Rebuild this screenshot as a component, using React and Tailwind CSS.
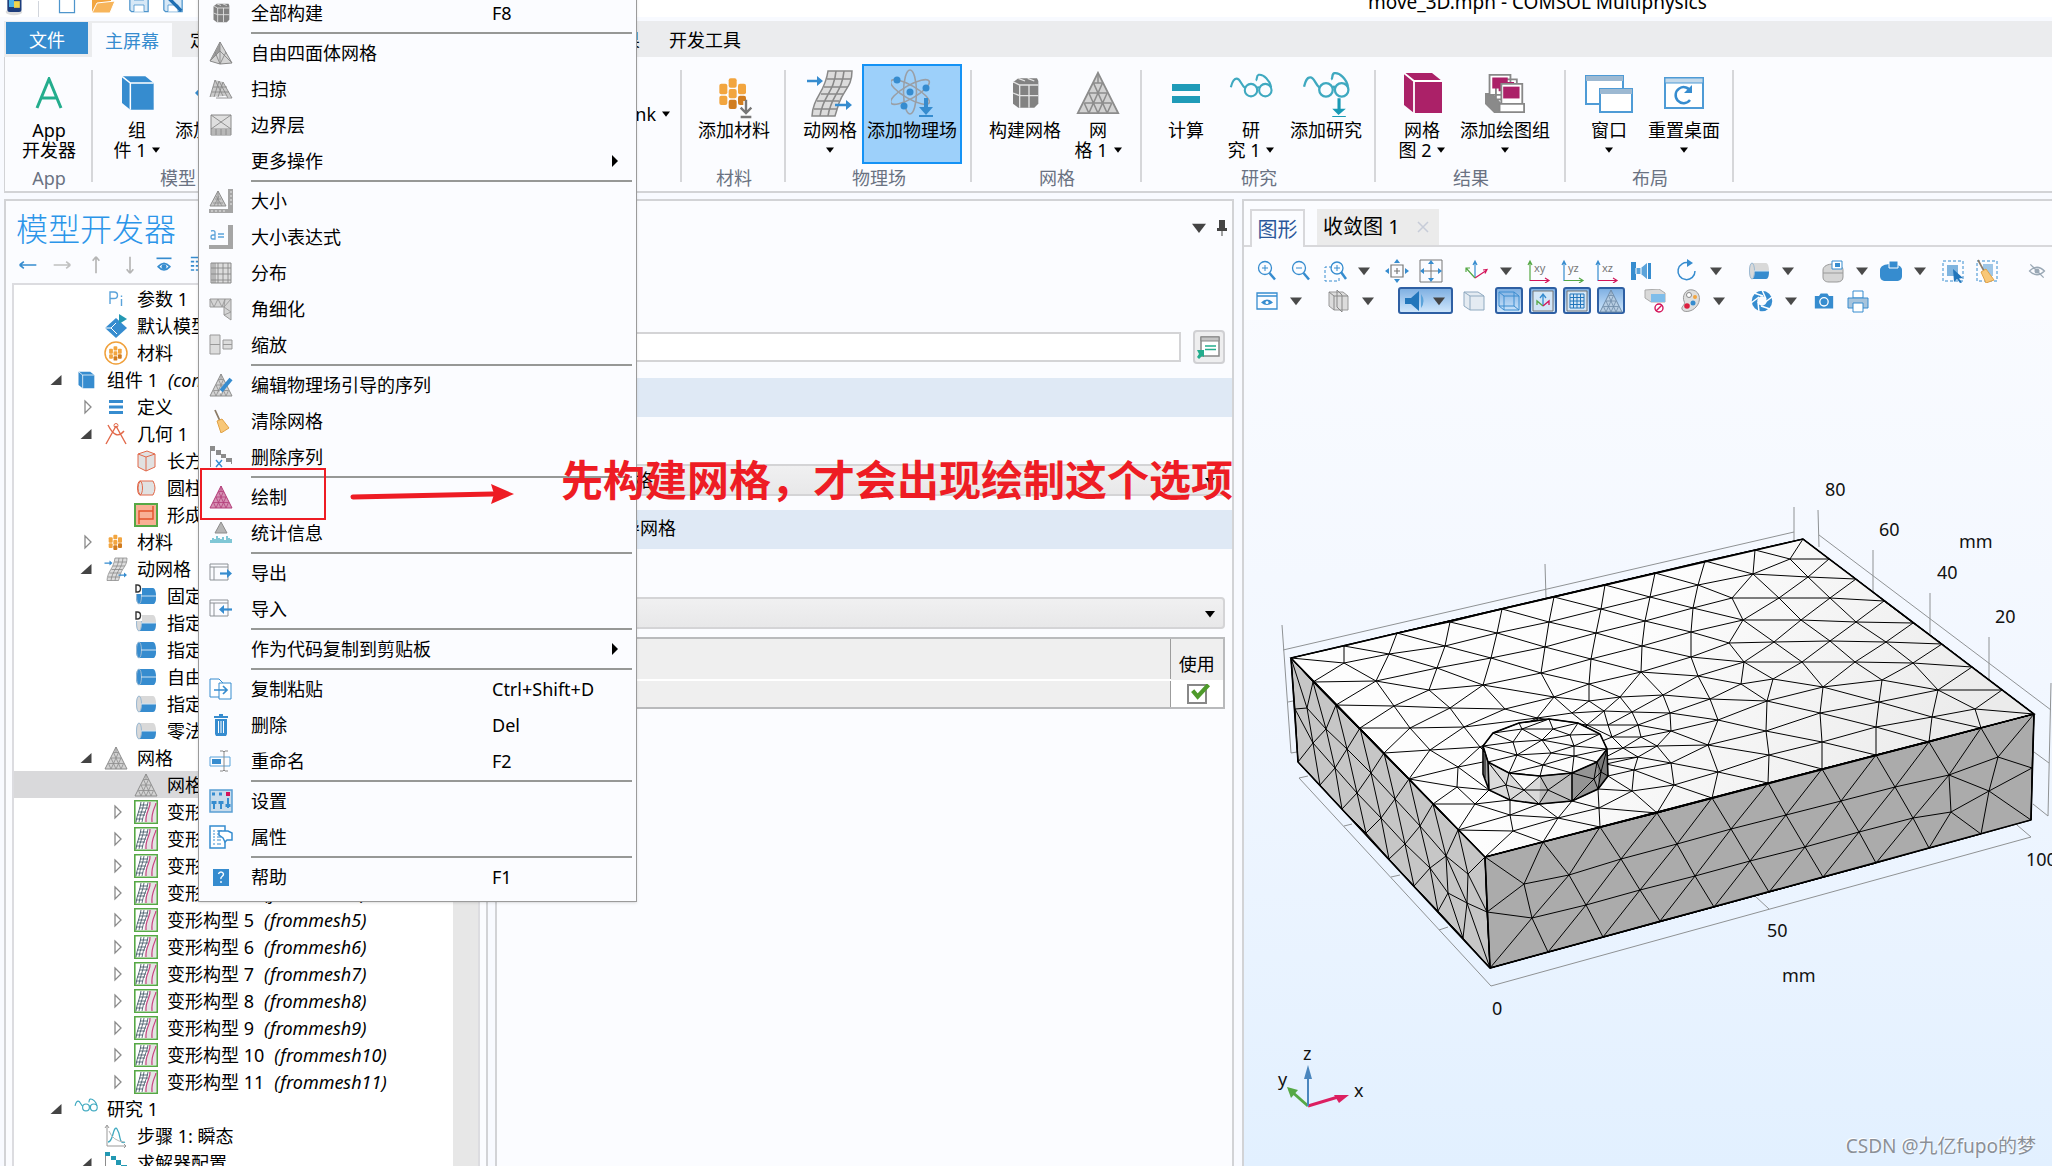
import clsx from 'clsx'

const FONT = 'font-["Noto_Sans","Noto_Sans_CJK_SC",sans-serif]'

/* ---------- icons ---------- */

function Svg({ className = 'size-6', box = '0 0 24 24', children }) {
  return (
    <svg viewBox={box} className={clsx('shrink-0', className)} fill="none" aria-hidden="true">
      {children}
    </svg>
  )
}

function MeshTriangle({ className, color = '#8c8c8c', fill = '#d2d2d2', children }) {
  return (
    <Svg className={className}>
      <path d="M12 1 23 23H1z" fill={fill} stroke={color} />
      <path
        d="M9.500 6.500h5M7 12h10M4.500 17.500h15M7 12l5 11M4.500 17.500 7 23M9.500 6.500 17 23M17 12l-5 11M19.500 17.500 17 23M14.500 6.500 7 23M12 1v5.500"
        stroke={color}
        strokeWidth=".8"
      />
      {children}
    </Svg>
  )
}

function Cube({ className, color = '#368ccf', line = '#fff' }) {
  return (
    <Svg className={className}>
      <path d="M3 2h14l5 4v16H8l-5-4z" fill={color} />
      <path d="m3 2 5 4h14M8 6v16" stroke={line} strokeWidth=".9" />
    </Svg>
  )
}

function GridBox({ className }) {
  return (
    <Svg className={className}>
      <path d="m3 4 4-3h14l1 2v17l-3 3H7l-4-3z" fill="#828282" />
      <path d="M3 4h1l4 2h14M8 6v17M15 6v17M8 14h14M3 12l5 2M7 1l5 2M14 1l5 2" stroke="#e4e4e4" />
    </Svg>
  )
}

function Glasses({ className, color = '#3fa9c0', arrow }) {
  return (
    <Svg className={className} box="0 0 46 46">
      <g stroke={color} strokeWidth="2.200">
        <circle cx="23" cy="20" r="6.500" />
        <circle cx="38" cy="20" r="6.500" />
        <path d="M29 18q2-2 3 0M17 18C12 14 12 8 8 8S3 13 2 17M44 17C43 10 36 3 31 4c-3 1-1 5-3 6" />
      </g>
      {arrow && <path d="M34 28h3v10h5l-7 6-6-6h5zM29 45h13v1H29z" fill="#1a9ab5" />}
    </Svg>
  )
}

function Bricks({ className, ring, arrow }) {
  return (
    <Svg className={className}>
      {ring && <circle cx="12" cy="12" r="11" fill="#fff" stroke="#f0a03a" strokeWidth="1.500" />}
      <g transform={ring ? 'translate(4.500 4.500) scale(.63)' : ''}>
        <rect x="1" y="5" width="6" height="8" rx="1.500" fill="#f2a53f" />
        <rect x="8" y="1" width="6" height="7" rx="1.500" fill="#f2a53f" />
        <rect x="15" y="5" width="6" height="8" rx="1.500" fill="#f2a53f" />
        <rect x="1" y="14" width="6" height="7" rx="1.500" fill="#f2a53f" />
        <rect x="8" y="9" width="6" height="7" rx="1.500" fill="#f2a53f" />
        <rect x="8" y="17" width="6" height="7" rx="1.500" fill="#d17c1e" />
        <rect x="15" y="14" width="6" height="7" rx="1.500" fill="#d17c1e" />
      </g>
      {arrow && <path d="M21 18v9m-4-3 4 4 4-4m-8 7h8" stroke="#fff" strokeWidth="4" />}
      {arrow && <path d="M21 17v9m-4-3 4 4 4-4m-8 7h8" stroke="#777" strokeWidth="1.800" />}
    </Svg>
  )
}

function MovingMesh({ className }) {
  return (
    <Svg className={className} box="0 0 46 48">
      <path d="M21 2h24c0 16-8 18-13 32l-4 13H5C6 28 18 24 21 2z" fill="#dcdcdc" stroke="#888" strokeWidth="1.500" />
      <path
        d="M29 2c-2 22-13 24-16 45M37 2c-2 22-13 24-16 45M20 10h24M17 18h24M14 25h22M10 32h22M7 40h23"
        stroke="#888"
        strokeWidth="1.600"
      />
      <path d="M0 12h13M28 36h13" stroke="#368ccf" strokeWidth="2.500" />
      <path d="m10 7 6 5-6 5zM39 31l6 5-6 5z" fill="#368ccf" />
    </Svg>
  )
}

function Atom({ className }) {
  return (
    <Svg className={className} box="0 0 42 48">
      <g stroke="#9a9fa6" strokeWidth="1.600">
        <ellipse cx="19" cy="23" rx="6.500" ry="22" />
        <ellipse cx="19" cy="23" rx="6.500" ry="22" transform="rotate(60 19 23)" />
        <ellipse cx="19" cy="23" rx="6.500" ry="22" transform="rotate(-60 19 23)" />
      </g>
      <g fill="#368ccf">
        <circle cx="19" cy="23" r="3.500" />
        <circle cx="6" cy="11" r="3.500" />
        <circle cx="35" cy="19" r="3.500" />
        <circle cx="13" cy="37" r="3.500" />
        <path d="M33 29h4v9h5l-7 8-7-8h5zM28 46h14v2H28z" />
      </g>
    </Svg>
  )
}

function Cylinder({ top = '#d9d9d9', tag, className }) {
  return (
    <Svg className={className}>
      <path d="M5 4h14c4 0 4 16 0 16H5C1 20 1 4 5 4z" fill={top} />
      <path d="M6 12h16c0 5-1 8-3 8H6z" fill="#368ccf" />
      <ellipse cx="5" cy="12" rx="2.500" ry="8" fill={top} stroke="#9ab9d3" />
      <path d="M7 12h15" stroke="#cfe3f3" />
      {tag && (
        <>
          <path d="M0 0h8v10H0z" fill="#fff" />
          <path d="M2 1v7h1.500c4 0 4-7 0-7z" stroke="#333" strokeWidth="1.400" />
        </>
      )}
    </Svg>
  )
}

function DeformedConfig() {
  return (
    <Svg>
      <path d="M.8.8h22.400v22.400H.8z" fill="#fff" stroke="#56a845" strokeWidth="1.600" />
      <path d="M15 2h7v20H10c1-8 4-12 5-20z" fill="#e4e4e4" />
      <path d="M7 2C6 10 3 14 2 22M10 2C9 10 6 14 5 22M14 2c-1 8-5 12-6 20M6 5h8M5 8h9M4 12h8M3 15h8M2 19h7" stroke="#4b5e6e" strokeWidth=".9" />
      <path d="M16 2c1 6-5 10-4 20M22 3c-1 5-5 9-4 19" stroke="#c8417f" strokeWidth="1.200" />
    </Svg>
  )
}

function Broom({ className }) {
  return (
    <Svg className={className}>
      <path d="m6 1 5 11" stroke="#8a7a66" strokeWidth="1.800" />
      <path d="m8 12 5-2 7 9-8 5z" fill="#f8c777" stroke="#e0a145" />
    </Svg>
  )
}

const icon = {
  build: <GridBox className="size-5" />,
  tetra: (
    <Svg>
      <path d="M11 1 1 20l10 3 12-1z" fill="#d4d4d4" stroke="#888" />
      <path d="M11 1 1 20l10-10z" fill="#9a9a9a" />
      <path d="M11 1v22M1 20l10-10 12 12M6 11l5 12 6-12" stroke="#888" strokeWidth=".9" />
    </Svg>
  ),
  sweep: (
    <Svg>
      <path d="M6 3 1 20l15-1 7 2L14 5z" fill="#c9c9c9" />
      <path d="M6 3 1 20m5-17 8 16M10 4 5 20m5-16 9 17M14 5 9 20m5-15 9 16H7M3 15h17M4 10h14" stroke="#888" strokeWidth=".9" />
    </Svg>
  ),
  boundary: (
    <Svg>
      <path d="M2 2h20v20H2z" fill="#dfdfdf" stroke="#888" />
      <path d="M2 2l20 14M22 2 2 16M2 16h20M2 18h20M2 20h20M7 16v6M12 16v6M17 16v6" stroke="#888" strokeWidth=".9" />
    </Svg>
  ),
  size: (
    <Svg>
      <path d="M9 2 17 17H1z" fill="#c9c9c9" stroke="#8c8c8c" />
      <path d="M19 0h5v24H0v-4h19z" fill="#a5a5a5" />
      <path d="M4 14h10M6 10h6M9 2v15M5 17l5-10M13 17 7 7" stroke="#8c8c8c" strokeWidth=".8" />
      <path d="M21 3h2M21 7h2M21 11h2M21 15h2M3 21v2M7 21v2M11 21v2M15 21v2" stroke="#e8e8e8" />
    </Svg>
  ),
  sizeExpr: (
    <Svg>
      <path d="M19 0h5v24H0v-4h19z" fill="#a5a5a5" />
      <path d="M2 6q4-1 4 1.500V14H3.500Q2 14 2 12t2-2h2M9 9h6M9 12h6" stroke="#5ba3da" strokeWidth="1.300" />
    </Svg>
  ),
  distribution: (
    <Svg>
      <path d="M2 2h20v20H2z" fill="#dcdcdc" stroke="#888" />
      <path d="M4 2v20M6 2v20M9 2v20M14 2v20M19 2v20M2 7h20M2 13h20M2 19h20" stroke="#888" strokeWidth=".9" />
    </Svg>
  ),
  corner: (
    <Svg>
      <path d="M1 2h21v21l-7-5v-8H1z" fill="#d4d4d4" stroke="#999" />
      <path d="m1 2 4 8 4-8 4 8 3-8-1 8 7-8M15 10l7 5-7 3" stroke="#999" strokeWidth=".9" />
    </Svg>
  ),
  scale: (
    <Svg>
      <path d="M1 2h10v19H1zM14 7h9v9h-9z" fill="#dcdcdc" stroke="#999" />
      <path d="M1 11.500h10M14 11.500h9" stroke="#999" />
    </Svg>
  ),
  editSeq: (
    <MeshTriangle>
      <path d="m12 18 10-12" stroke="#368ccf" strokeWidth="4" />
      <path d="m10 21 1-4 2 2z" fill="#fff" />
    </MeshTriangle>
  ),
  clear: <Broom />,
  deleteSeq: (
    <Svg>
      <path d="M1 1h5v5H1zM7 5h5v5H7zM12 9h5v4h-5zM17 13h6v4h-6z" fill="#8c8c8c" />
      <path d="M1.500 6v16M22.500 14v5" stroke="#8c8c8c" />
      <path d="m7 15 6 7m0-7-6 7" stroke="#368ccf" strokeWidth="1.400" />
    </Svg>
  ),
  plot: <MeshTriangle color="#b33c78" fill="#d58fb2" />,
  stats: (
    <Svg>
      <path d="m12 1 6 11H6z" fill="#b5b5b5" stroke="#8c8c8c" />
      <path d="M2 22v-3M4 22v-5M6 22v-4M8 22v-7M10 22v-5M12 22v-4M14 22v-6M16 22v-3M18 22v-7M20 22v-5M22 22v-4" stroke="#2ea3ba" strokeWidth="1.200" />
    </Svg>
  ),
  exportTo: (
    <Svg>
      <path d="M1 3h18v16H1z" stroke="#8c9196" />
      <path d="M1 6h18M5 6v13" stroke="#8c9196" />
      <path d="M11 12.500h9" stroke="#368ccf" strokeWidth="2.200" />
      <path d="m18 8 5 4.500-5 4.500z" fill="#368ccf" />
    </Svg>
  ),
  importFrom: (
    <Svg>
      <path d="M1 3h18v16H1z" stroke="#8c9196" />
      <path d="M1 6h18M5 6v13" stroke="#8c9196" />
      <path d="M23 12.500h-9" stroke="#368ccf" strokeWidth="2.200" />
      <path d="m15 8-5 4.500 5 4.500z" fill="#368ccf" />
    </Svg>
  ),
  duplicate: (
    <Svg>
      <path d="M1 2h9l4 4v14H1z" fill="#fff" stroke="#368ccf" />
      <path d="M10 6h12v16H10z" fill="#fff" stroke="#368ccf" />
      <path d="M5 13h13m-4-4 4 4-4 4" stroke="#368ccf" strokeWidth="1.700" />
    </Svg>
  ),
  trash: (
    <Svg>
      <path d="M5 3h14v2H5zM10 1h4v2h-4zM6 6h12v15l-1 2H7l-1-2z" fill="#368ccf" />
      <path d="M9.500 8v12M12 8v12M14.500 8v12" stroke="#fff" />
    </Svg>
  ),
  rename: (
    <Svg>
      <path d="M1 8h20v9H1z" stroke="#5ba3da" />
      <path d="M3 10h9v5H3z" fill="#368ccf" />
      <path d="M11 2h3l1 1 1-1h3M15 3v18M11 22h3l1-1 1 1h3" stroke="#888" />
    </Svg>
  ),
  settings: (
    <Svg>
      <path d="M1 1h22v22H1z" fill="#c9dcec" stroke="#5a9fd4" strokeWidth="1.500" />
      <path d="M3 5h3M10 5h3" stroke="#368ccf" strokeWidth="3" />
      <path d="M17 5h4" stroke="#d4145a" strokeWidth="4" />
      <path d="M5 13v7M12 13v7M19 9v10" stroke="#368ccf" strokeWidth="2" />
      <path d="M2.500 12h5v3h-5zM9.500 12h5v3h-5zM16.500 15h5v3h-5z" fill="#368ccf" />
    </Svg>
  ),
  properties: (
    <Svg>
      <path d="M1 1h15v22H1z" fill="#fff" stroke="#368ccf" strokeWidth="1.500" />
      <path d="M4 6h2m2 0h5M4 9h2m2 0h4M4 12h2m2 0h4M4 15h2m2 0h4M4 19h2m2 0h4" stroke="#368ccf" />
      <path d="M10 6h9l4 2v7h-5l-2 2-2-4-4-3z" fill="#fff" stroke="#368ccf" strokeWidth="1.500" />
    </Svg>
  ),
  help: (
    <Svg>
      <path d="M4 4h16v17H4z" fill="#368ccf" />
      <path d="M9.500 9q.5-2 2.500-2t2.500 2q0 1.500-1.500 2.500t-1 2.500M12 16v2" stroke="#fff" strokeWidth="1.400" />
    </Svg>
  ),
  param: (
    <Svg>
      <path d="M6 17V5h4q3.500 0 3.500 3.200T10 11.500H6M17.500 12v7M17.500 8.500v1.500" stroke="#5ba3da" strokeWidth="1.400" />
    </Svg>
  ),
  modelInput: (
    <Svg>
      <path d="m1 14 11-10 11 10-11 10z" fill="#368ccf" />
      <path d="m7 14 5-5M7 14l6 6M7 14H1" stroke="#fff" />
      <path d="m15 0 8 5-8 5z" fill="#2398b2" />
    </Svg>
  ),
  globalMaterials: <Bricks ring />,
  component: <Cube className="size-5" />,
  definitions: (
    <Svg>
      <path d="M5 5h14v3H5zM5 10.500h14v3H5zM5 16h14v3H5z" fill="#368ccf" />
    </Svg>
  ),
  geometry: (
    <Svg>
      <path d="M12 4 2 22M12 4l10 18M4 3q8 16 16 6" stroke="#e2694a" strokeWidth="1.400" />
      <circle cx="12" cy="3.500" r="2" stroke="#e2694a" />
    </Svg>
  ),
  block: (
    <Svg>
      <path d="m4 5 9-3 8 3v13l-9 4-8-4z" fill="#e1e1e1" stroke="#e2694a" />
      <path d="m4 5 8 3 9-3M12 8v14" stroke="#e2694a" />
    </Svg>
  ),
  cylinder: (
    <Svg>
      <path d="M6 5h13q4 7 0 14H6q-4-7 0-14z" fill="#e1e1e1" stroke="#e2694a" />
      <ellipse cx="6" cy="12" rx="2.500" ry="7" stroke="#e2694a" />
    </Svg>
  ),
  union: (
    <Svg>
      <path d="M1 1h22v22H1z" fill="#f8b095" stroke="#56a845" strokeWidth="2" />
      <path d="M5 8h14v8H5zM19 3v13M5 8v13" stroke="#e2532a" strokeWidth="1.400" />
    </Svg>
  ),
  materials: <Bricks className="size-4" />,
  movingMesh: <MovingMesh className="size-6" />,
  cylBlueTag: <Cylinder top="#368ccf" tag />,
  cylTag: <Cylinder tag />,
  cylBlue: <Cylinder top="#368ccf" />,
  cylHalf: <Cylinder />,
  mesh: <MeshTriangle />,
  deformed: <DeformedConfig />,
  study: <Glasses className="size-6" />,
  step: (
    <Svg>
      <path d="M3 2v20h19M1 4l2-3 2 3M20 20l2 2-2 2" stroke="#999" />
      <path d="M4 18q3 0 5-8t4-5 3 9 5 4" stroke="#3fa9c0" strokeWidth="1.300" />
      <path d="M5 7q4 10 15 11" stroke="#b5b5b5" />
    </Svg>
  ),
  solver: (
    <Svg>
      <path d="M1 1h5v4H1zM7 5h5v4H7zM12 9h5v5h-5zM17 14h6v5h-6z" fill="#2398b2" />
      <path d="M1.500 5v17" stroke="#8c8c8c" />
    </Svg>
  ),
}

/* ---------- data ---------- */

const menuItems = [
  { icon: 'build', label: '全部构建', key: 'F8' },
  null,
  { icon: 'tetra', label: '自由四面体网格' },
  { icon: 'sweep', label: '扫掠' },
  { icon: 'boundary', label: '边界层' },
  { label: '更多操作', sub: true },
  null,
  { icon: 'size', label: '大小' },
  { icon: 'sizeExpr', label: '大小表达式' },
  { icon: 'distribution', label: '分布' },
  { icon: 'corner', label: '角细化' },
  { icon: 'scale', label: '缩放' },
  null,
  { icon: 'editSeq', label: '编辑物理场引导的序列' },
  { icon: 'clear', label: '清除网格' },
  { icon: 'deleteSeq', label: '删除序列' },
  null,
  { icon: 'plot', label: '绘制' },
  { icon: 'stats', label: '统计信息' },
  null,
  { icon: 'exportTo', label: '导出' },
  { icon: 'importFrom', label: '导入' },
  null,
  { label: '作为代码复制到剪贴板', sub: true },
  null,
  { icon: 'duplicate', label: '复制粘贴', key: 'Ctrl+Shift+D' },
  { icon: 'trash', label: '删除', key: 'Del' },
  { icon: 'rename', label: '重命名', key: 'F2' },
  null,
  { icon: 'settings', label: '设置' },
  { icon: 'properties', label: '属性' },
  null,
  { icon: 'help', label: '帮助', key: 'F1' },
]

const deformedRows = Array.from({ length: 11 }, (_, i) => ({
  level: 2,
  arrow: 'closed',
  icon: 'deformed',
  label: `变形构型 ${i + 1}`,
  tag: `(frommesh${i + 1})`,
}))

const treeRows = [
  { level: 1, icon: 'param', label: '参数 1' },
  { level: 1, icon: 'modelInput', label: '默认模型输入' },
  { level: 1, icon: 'globalMaterials', label: '材料' },
  { level: 0, arrow: 'open', icon: 'component', label: '组件 1', tag: '(comp1)' },
  { level: 1, arrow: 'closed', icon: 'definitions', label: '定义' },
  { level: 1, arrow: 'open', icon: 'geometry', label: '几何 1' },
  { level: 2, icon: 'block', label: '长方体 1' },
  { level: 2, icon: 'cylinder', label: '圆柱体 1' },
  { level: 2, icon: 'union', label: '形成联合体' },
  { level: 1, arrow: 'closed', icon: 'materials', label: '材料' },
  { level: 1, arrow: 'open', icon: 'movingMesh', label: '动网格' },
  { level: 2, icon: 'cylBlueTag', label: '固定边界 1' },
  { level: 2, icon: 'cylTag', label: '指定变形 1' },
  { level: 2, icon: 'cylBlue', label: '指定变形 2' },
  { level: 2, icon: 'cylBlue', label: '自由变形 1' },
  { level: 2, icon: 'cylHalf', label: '指定位移 1' },
  { level: 2, icon: 'cylHalf', label: '零法向位移 1' },
  { level: 1, arrow: 'open', icon: 'mesh', label: '网格' },
  { level: 2, icon: 'mesh', label: '网格 1', selected: true },
  ...deformedRows,
  { level: 0, arrow: 'open', icon: 'study', label: '研究 1' },
  { level: 1, icon: 'step', label: '步骤 1: 瞬态' },
  { level: 1, arrow: 'open', icon: 'solver', label: '求解器配置' },
]

const indent = ['pl-[34px]', 'pl-[64px]', 'pl-[94px]']

/* ---------- title bar, tabs, ribbon ---------- */

function Caret({ className = 'size-2' }) {
  return (
    <Svg className={className} box="0 0 10 10">
      <path d="M0 2h10L5 8.500z" fill="currentColor" />
    </Svg>
  )
}

function TitleBar() {
  return (
    <div className="relative flex h-[17px] shrink-0 items-end gap-[14px] overflow-hidden bg-white pl-1">
      <Svg className="size-5">
        <ellipse cx="12" cy="18" rx="10" ry="4" fill="#ddd" />
        <rect x="4" y="0" width="17" height="18" rx="3" fill="#1d3d7c" />
        <path d="M12 5h7v8h-7z" fill="#f2d44b" />
        <path d="M6 3h6v9H6z" fill="#4fb4e6" />
      </Svg>
      <span className="h-4 w-px bg-gray-300" />
      <Svg className="ml-1 h-6 w-5">
        <path d="M3 0v21h18V6l-5-6" fill="#fff" stroke="#4e95cc" strokeWidth="1.500" />
      </Svg>
      <Svg>
        <path d="M1 3h8l2 3h9v4l-3 10H1z" fill="#f2a53f" />
        <path d="m6 10 18-2-5 12H1z" fill="#f7b55b" stroke="#fff" />
      </Svg>
      <Svg className="h-6 w-5">
        <path d="M1 0h22v20H3l-2-2z" fill="#d7e8f6" stroke="#4e95cc" strokeWidth="1.500" />
        <path d="M6 20v-8h12v8M6 0v6h12V0" fill="#fff" stroke="#4e95cc" />
      </Svg>
      <Svg className="h-6 w-5">
        <path d="M1 0h22v20H3l-2-2z" fill="#d7e8f6" stroke="#4e95cc" strokeWidth="1.500" />
        <path d="M6 20v-8h12v8" fill="#fff" stroke="#4e95cc" />
        <path d="m6 3 16 16" stroke="#1f6fb2" strokeWidth="4" />
      </Svg>
      <h1 className="absolute -top-2.5 left-2/3 text-[19px] leading-6 font-normal">move_3D.mph - COMSOL Multiphysics</h1>
    </div>
  )
}

function RibbonTabs() {
  return (
    <nav className="ml-1 flex h-9 shrink-0 items-center bg-[#ebecee] pt-0.5 text-lg">
      <a href="#file" className="mb-1 ml-0.5 h-8 w-[82px] bg-[#368ccf] pt-0.5 text-center leading-8 text-white">
        文件
      </a>
      <a href="#home" className="ml-1 w-20 self-stretch bg-[#fbfcff] pt-0.5 text-center leading-8 text-[#368ccf]">
        主屏幕
      </a>
      <a href="#definitions" className="ml-[18px] w-[414px]">
        定义
      </a>
      <a href="#results" className="w-[65px]">
        结果
      </a>
      <a href="#developer">开发工具</a>
    </nav>
  )
}

function RibbonButton({ icon, width, lines, caret, active }) {
  return (
    <button
      type="button"
      className={clsx(
        'flex h-[100px] flex-col items-center border-2 whitespace-nowrap',
        width,
        active ? 'border-[#1492f5] bg-[#9dd0fa]' : 'border-transparent',
      )}
    >
      <span className="flex h-[54px] items-center justify-center">{icon}</span>
      {lines.map((line, i) => (
        <span key={line} className="flex items-center gap-1.5 text-lg leading-5">
          {line}
          {caret && i > 0 && <Caret />}
        </span>
      ))}
      {caret && lines.length === 1 && <Caret className="mt-1.5 size-2" />}
    </button>
  )
}

function RibbonGroup({ label, width, pad, children }) {
  return (
    <section className={clsx('relative flex shrink-0 flex-col pt-[7px]', width)}>
      <div className={clsx('flex', pad)}>{children}</div>
      <p className="text-center text-lg leading-7 text-gray-500">{label}</p>
      <span className="absolute top-[13px] right-0 h-28 w-0.5 bg-[#d6d7da]" />
    </section>
  )
}

function Ribbon() {
  return (
    <div className="ml-1 flex h-34 shrink-0 overflow-hidden border-b-2 border-l border-[#d2d3d6] bg-[#fbfcff]">
      <RibbonGroup label="App" width="w-[88px]">
        <RibbonButton
          width="w-[90px]"
          lines={['App', '开发器']}
          icon={
            <Svg className="h-8 w-7" box="0 0 28 32">
              <path d="M2 31 14 2l12 29M6 21h16" stroke="#24ad8d" strokeWidth="3" />
            </Svg>
          }
        />
      </RibbonGroup>
      <RibbonGroup label={<span className="block pl-[67px] text-left">模型</span>} width="w-[589px]">
        <RibbonButton width="w-[88px]" caret lines={['组', '件 1']} icon={<Cube className="size-10" />} />
        <RibbonButton
          width="w-[60px]"
          lines={['添加组件']}
          icon={
            <Svg className="size-8">
              <path d="m1 12 11-11 11 11-11 11z" fill="#d7e8f6" stroke="#368ccf" strokeWidth="1.500" />
            </Svg>
          }
        />
        <button type="button" className="ml-auto flex items-center gap-1.5 pr-3 text-lg">
          LiveLink <Caret />
        </button>
      </RibbonGroup>
      <RibbonGroup label="材料" width="w-[104px]">
        <RibbonButton width="w-[108px]" lines={['添加材料']} icon={<Bricks arrow className="size-8 overflow-visible" />} />
      </RibbonGroup>
      <RibbonGroup label="物理场" width="w-[186px]" pad="pl-3">
        <RibbonButton width="w-16" caret lines={['动网格']} icon={<MovingMesh className="h-12 w-[46px]" />} />
        <RibbonButton width="w-[100px]" active lines={['添加物理场']} icon={<Atom className="h-12 w-[42px]" />} />
      </RibbonGroup>
      <RibbonGroup label="网格" width="w-[170px]" pad="pl-1">
        <RibbonButton width="w-[98px]" lines={['构建网格']} icon={<GridBox className="size-8" />} />
        <RibbonButton width="w-[48px]" caret lines={['网', '格 1']} icon={<MeshTriangle className="h-11 w-12" />} />
      </RibbonGroup>
      <RibbonGroup label="研究" width="w-[234px]" pad="pl-3.5">
        <RibbonButton
          width="w-[60px]"
          lines={['计算']}
          icon={
            <Svg className="h-8 w-7" box="0 0 28 32">
              <path d="M0 7h28v7H0zM0 19h28v7H0z" fill="#1f9bb8" />
            </Svg>
          }
        />
        <RibbonButton width="w-[70px]" caret lines={['研', '究 1']} icon={<Glasses className="size-11" />} />
        <RibbonButton width="w-[80px]" lines={['添加研究']} icon={<Glasses className="size-12" arrow />} />
      </RibbonGroup>
      <RibbonGroup label="结果" width="w-[190px]" pad="pl-3">
        <RibbonButton width="w-[68px]" caret lines={['网格', '图 2']} icon={<Cube className="size-12" color="#ab2168" />} />
        <RibbonButton
          width="w-[98px]"
          caret
          lines={['添加绘图组']}
          icon={
            <Svg className="h-11 w-10" box="0 0 44 44">
              <path d="M0 22h8l14 16v6H10L0 34z" fill="#8a8a8a" />
              <path d="M5 2h23v22H5zM12 7h23v22H12z" fill="#fff" stroke="#888" strokeWidth="2" />
              <path d="M8 5h17v12H8zM15 10h17v10H15z" fill="#ab2168" />
              <path d="M18 12h23v22H18z" fill="#fff" stroke="#888" strokeWidth="2" />
              <path d="M20 15h18v13H20z" fill="#ab2168" />
              <path d="M16 34h27v9H16z" fill="#fff" stroke="#888" strokeWidth="2" />
            </Svg>
          }
        />
      </RibbonGroup>
      <RibbonGroup label="布局" width="w-[168px]" pad="pl-2.5">
        <RibbonButton
          width="w-[66px]"
          caret
          lines={['窗口']}
          icon={
            <Svg className="h-10 w-12" box="0 0 48 40">
              <path d="M1 3h37v28H1z" fill="#fff" stroke="#4e9bd6" strokeWidth="2" />
              <path d="M1 3h37v5H1z" fill="#9db9d2" />
              <path d="M15 16h32v23H15z" fill="#fff" stroke="#4e9bd6" strokeWidth="2" />
              <path d="M15 16h32v5H15z" fill="#9db9d2" />
            </Svg>
          }
        />
        <RibbonButton
          width="w-[84px]"
          caret
          lines={['重置桌面']}
          icon={
            <Svg className="h-8 w-10" box="0 0 40 32">
              <path d="M1 1h38v30H1z" fill="#fff" stroke="#4e9bd6" strokeWidth="2" />
              <path d="M1 1h38v5H1z" fill="#c4d9ea" stroke="#4e9bd6" />
              <path d="M26 23a8 8 0 1 1 1-8" stroke="#368ccf" strokeWidth="2.500" />
              <path d="M28 8v8h-8z" fill="#368ccf" />
            </Svg>
          }
        />
      </RibbonGroup>
    </div>
  )
}

/* ---------- model builder ---------- */

function TreeRow({ row }) {
  return (
    <li
      className={clsx(
        'flex h-[27px] items-center whitespace-nowrap',
        indent[row.level],
        row.selected && 'bg-[#d9d9db]',
      )}
    >
      <span className="flex w-[26px] justify-start pl-0.5">
        {row.arrow === 'open' && (
          <Svg className="size-3">
            <path d="M23 2v20H1z" fill="#444" />
          </Svg>
        )}
        {row.arrow === 'closed' && (
          <Svg className="ml-1 h-4 w-2" box="0 0 8 16">
            <path d="m1 2 6 6-6 6z" stroke="#8a8a8a" strokeWidth="1.300" />
          </Svg>
        )}
      </span>
      <span className="flex w-6 justify-center">{icon[row.icon]}</span>
      <span className="ml-[9px] text-lg">{row.label}</span>
      {row.tag && <em className="ml-2.5 text-lg">{row.tag}</em>}
    </li>
  )
}

function ArrowIcon({ color, turn }) {
  return (
    <Svg className={clsx('size-5', turn)}>
      <path d="M2 12h20M2 12l5-4M2 12l5 4" stroke={color} strokeWidth="2" />
    </Svg>
  )
}

function ModelBuilder() {
  return (
    <aside className="ml-1 flex w-[484px] shrink-0 flex-col border-2 border-b-0 border-[#d2d3d6] bg-[#fbfcff]">
      <h2 className="pt-1.5 pl-2.5 text-[32px] leading-11 font-light text-[#2b95e9]">模型开发器</h2>
      <div className="mb-1 flex h-7 items-center gap-3.5 pl-3">
        <ArrowIcon color="#368ccf" />
        <ArrowIcon color="#c0c0c0" turn="rotate-180" />
        <ArrowIcon color="#b5b5b5" turn="rotate-90" />
        <ArrowIcon color="#b5b5b5" turn="-rotate-90" />
        <Svg className="size-5">
          <path d="M3 3h18v2H3z" fill="#368ccf" />
          <path d="M5 14q7-8 14 0-7 8-14 0z" stroke="#368ccf" strokeWidth="2" />
          <circle cx="12" cy="14" r="3" fill="#368ccf" />
        </Svg>
        <Svg className="ml-0.5 size-5">
          <path d="M1 3h20M1 8h4M7 8h14M1 13h4M7 13h14M1 18h4M7 18h14" stroke="#368ccf" strokeWidth="2" />
        </Svg>
      </div>
      <div className="mr-1.5 ml-1.5 flex min-h-0 flex-1 overflow-hidden border-2 border-b-0 border-[#dcdce0] bg-white">
        <ul className="min-w-0 flex-1">
          {treeRows.map((row, i) => (
            <TreeRow key={i} row={row} />
          ))}
        </ul>
        <div className="w-[25px] bg-[#e7e7e7]" />
      </div>
    </aside>
  )
}

/* ---------- settings ---------- */

function Select({ label, value }) {
  return (
    <div className="relative mr-[7px] ml-2">
      <select
        aria-label={label}
        className="h-8 w-full appearance-none rounded-sm border-2 border-[#d4d4d6] bg-linear-to-b from-[#f0f0f1] to-[#e8e8e9] pl-5 text-lg leading-6"
      >
        <option>{value}</option>
      </select>
      <Caret className="pointer-events-none absolute top-3 right-2.5 size-2.5" />
    </div>
  )
}

function Settings() {
  return (
    <main className="ml-[7px] w-[739px] shrink-0 border-2 border-b-0 border-[#d2d3d6] bg-[#fbfcff]">
      <div className="flex h-[54px] items-center justify-end gap-2.5 pr-1 text-[#444]">
        <Caret className="size-3.5" />
        <Svg className="h-4 w-3" box="0 0 12 16">
          <path d="M3 0h6v8h2v3H1V8h2zM5.500 11h1v5h-1z" fill="#444" />
        </Svg>
      </div>
      <div className="mt-[75px] flex items-center gap-3 pr-[7px] pl-2">
        <input
          aria-label="标签"
          className="h-[30px] min-w-0 flex-1 border-2 border-[#d4d4d6] bg-white px-2 text-lg outline-none"
        />
        <button
          type="button"
          aria-label="显示"
          className="flex h-[34px] w-8 items-center justify-center rounded-sm border-2 border-[#d0d0d3] bg-[#eeeeef]"
        >
          <Svg>
            <path d="M4 2h18v19H4z" fill="#fff" stroke="#888" strokeWidth="1.500" />
            <path d="M4 2h18v4H4z" fill="#c5c5c5" stroke="#888" />
            <path d="M8 11h11M8 14.500h11" stroke="#24ad8d" strokeWidth="1.700" />
            <path d="M0 15h7v7l-2-1-3 3-2-2 2-3z" fill="#24ad8d" />
          </Svg>
        </button>
      </div>
      <div className="mt-3.5 h-[39px] bg-[#dfe9f5]" />
      <div className="mt-[47px]">
        <Select label="序列类型" value="物理场控制网格" />
      </div>
      <h3 className="mt-3.5 h-[39px] bg-[#dfe9f5] pl-[53px] text-lg leading-9 font-normal">物理场引导网格</h3>
      <div className="mt-12">
        <Select label="单元大小" value="" />
      </div>
      <table className="mt-2 mr-[7px] ml-2 w-[720px] border-collapse border-2 border-[#b9babc] text-lg">
        <thead>
          <tr className="h-[42px] bg-[#efefef]">
            <th className="border-b-2 border-white" />
            <th className="w-[54px] border-l border-[#9c9c9c] pt-2 font-normal">使用</th>
          </tr>
        </thead>
        <tbody>
          <tr className="h-7 bg-[#efefef]">
            <td />
            <td className="border-l border-[#9c9c9c] bg-white">
              <label className="relative mx-auto block size-5">
                <input type="checkbox" defaultChecked aria-label="使用" className="block size-5 appearance-none border-2 border-[#888] bg-white" />
                <Svg className="absolute top-0 left-1 size-5">
                  <path d="m2 8 6 7L21 1" stroke="#4e9a2a" strokeWidth="5" />
                </Svg>
              </label>
            </td>
          </tr>
        </tbody>
      </table>
    </main>
  )
}

/* ---------- graphics ---------- */

// Delaunay triangulation (Bowyer-Watson), returns index pairs for the edges.
function meshEdges(pts) {
  const n = pts.length
  const all = [...pts, [-1e5, -1e5], [1e5, -1e5], [0, 1e5]]
  let tris = [[n, n + 1, n + 2]]
  const inCircle = ([a, b, c], [px, py]) => {
    const [ax, ay] = all[a]
    const [bx, by] = all[b]
    const [cx, cy] = all[c]
    const d = 2 * (ax * (by - cy) + bx * (cy - ay) + cx * (ay - by))
    const a2 = ax * ax + ay * ay
    const b2 = bx * bx + by * by
    const c2 = cx * cx + cy * cy
    const ux = (a2 * (by - cy) + b2 * (cy - ay) + c2 * (ay - by)) / d
    const uy = (a2 * (cx - bx) + b2 * (ax - cx) + c2 * (bx - ax)) / d
    return Math.hypot(px - ux, py - uy) < Math.hypot(ax - ux, ay - uy)
  }
  const edgeKey = (a, b) => (a < b ? `${a}-${b}` : `${b}-${a}`)

  for (let i = 0; i < n; i++) {
    const rim = new Map()
    tris = tris.filter((t) => {
      if (!inCircle(t, all[i])) return true
      for (let k = 0; k < 3; k++) {
        const key = edgeKey(t[k], t[(k + 1) % 3])
        if (rim.has(key)) rim.delete(key)
        else rim.set(key, [t[k], t[(k + 1) % 3]])
      }
      return false
    })
    for (const [a, b] of rim.values()) tris.push([a, b, i])
  }

  const edges = new Set()
  for (const t of tris) {
    for (let k = 0; k < 3; k++) {
      const a = t[k]
      const b = t[(k + 1) % 3]
      if (a < n && b < n) edges.add(edgeKey(a, b))
    }
  }
  return [...edges].map((e) => e.split('-').map(Number))
}

// u and v are the projected sides of the face, lu and lv their lengths in mm.
function facePath(text, u, v, lu, lv) {
  const pts = text.trim().split(/\s+/).map((p) => p.split(',').map(Number))
  const det = u[0] * v[1] - u[1] * v[0]
  const plane = pts.map(([x, y]) => [((x * v[1] - y * v[0]) / det) * lu, ((u[0] * y - u[1] * x) / det) * lv])
  return meshEdges(plane)
    .map(([a, b]) => `M${pts[a]}L${pts[b]}`)
    .join('')
}

const topMesh = facePath(
  `1291,658 1344,646 1397,633 1450,622 1502,609 1554,597 1605,585 1655,573 1705,561 1755,550 1803,539
   1829,559 1856,579 1884,601 1913,623 1942,644 1972,667 2002,690 2034,714
   1981,728 1929,742 1876,755 1822,769 1768,783 1712,798 1657,813 1600,827 1543,842 1485,857
   1458,830 1433,804 1409,779 1384,753 1360,728 1336,705 1313,682
   1344,663 1389,654 1376,681 1445,646 1437,668 1429,690 1497,633 1491,658 1483,685 1549,622 1545,647 1541,673
   1601,609 1596,633 1591,659 1589,684 1589,701 1650,597 1645,621 1642,646 1641,672 1394,706 1450,708 1505,709
   1410,728 1464,727 1430,750 1554,697 1572,713 1537,718 1604,711 1620,697 1632,712 1663,695 1670,713 1587,725
   1608,725 1612,737 1638,725 1641,737 1671,731 1623,748 1657,746 1638,757 1671,763 1634,770 1674,785 1632,791
   1458,767 1457,787 1475,804 1480,747 1510,815 1513,831 1558,818 1599,808
   1489,790 1510,800 1539,804 1572,801 1598,789 1608,776 1606,764 1600,760 1578,751 1549,747 1519,751 1493,760
   1698,585 1693,608 1691,632 1691,657 1698,676 1710,699 1718,720 1708,745 1718,772
   1753,574 1790,559 1808,577 1732,598 1779,598 1830,598 1743,620 1801,620 1856,622 1729,643 1774,642 1830,641 1886,642
   1744,662 1802,662 1855,662 1913,663 1741,684 1773,679 1767,701 1823,687 1882,680 1938,690
   1820,713 1879,702 1932,717 1975,709 1766,731 1822,742 1876,727 1769,755`,
  [530, -131],
  [212, 187],
  100,
  80,
)

const frontMesh = facePath(
  `1485,857 1543,842 1600,827 1657,813 1712,798 1768,783 1822,769 1876,755 1929,742 1981,728 2034,714
   2032,768 2031,820 1981,834 1929,848 1876,863 1823,877 1769,892 1714,907 1660,921 1603,937 1548,952 1490,968 1487,912
   1524,884 1569,875 1621,859 1677,844 1731,829 1786,815 1841,801 1895,787 1949,775 1998,757
   1532,918 1586,905 1640,890 1695,876 1750,861 1805,847 1859,832 1913,818 1951,812 1989,791`,
  [549, -146],
  [2, 108],
  100,
  20,
)

const leftMesh = facePath(
  `1291,658 1313,682 1336,705 1360,728 1384,753 1409,779 1433,804 1458,830 1485,857 1487,912 1490,968
   1463,938 1438,911 1414,886 1389,859 1366,833 1342,809 1320,785 1298,762 1295,709
   1307,708 1326,729 1347,749 1371,773 1395,799 1420,826 1446,856 1468,874
   1313,743 1335,768 1357,793 1381,818 1405,844 1430,868 1448,893 1467,903`,
  [193, 203],
  [6, 108],
  80,
  20,
)

const discMesh = facePath(
  `1483,746 1493,733 1519,723 1549,719 1578,723 1600,734 1607,749 1597,762 1572,773 1540,776 1509,773 1488,762
   1522,729 1553,729 1513,742 1542,740 1570,735 1574,746 1517,755 1551,753 1543,765 1574,756`,
  [530, -131],
  [212, 187],
  100,
  80,
)

function Plot() {
  return (
    <svg viewBox="1244 320 808 846" preserveAspectRatio="xMinYMin slice" className="block min-h-0 w-full flex-1" role="img" aria-label="网格图">
      <defs>
        <linearGradient id="topFace" x1="0" y1="0" x2="1" y2="0.3">
          <stop offset=".5" stopColor="#fdfdfd" />
          <stop offset="1" stopColor="#ebebeb" />
        </linearGradient>
      </defs>
      <path
        d="M1282 625 1291 753 1297 752M1288 702 1293 701M1283 650 1794 532M1545 564 1546 598M1794 507V540M1818 510 1819 547M1819 535 2051 710M1873 550V592M1930 593V634M1989 637V680M2051 683 2048 816 2033 804M2049 763 2034 752M2017 825 2031 837 1491 986 1299 778 1308 776M1769 909 1755 896M1344 826 1352 824M1391 877 1400 875M1439 930 1448 927"
        stroke="#8f9294"
        fill="none"
      />
      <path d="M1291 658 1803 539 2034 714 1485 857z" fill="url(#topFace)" />
      <path d="M1291 658 1485 857 1490 968 1298 762z" fill="#c6c6c6" />
      <path d="M1485 857 2034 714 2031 820 1490 968z" fill="#ababab" />
      <path d={topMesh + frontMesh + leftMesh} stroke="#000" fill="none" />
      <path d="M1291 658 1803 539 2034 714 1485 857zM1291 658 1298 762 1490 968 2031 820 2034 714M1485 857 1490 968" stroke="#000" strokeWidth="1.600" fill="none" />

      <path d="M1483 746 1488 762 1489 790 1483 774z" fill="#a8a8a8" />
      <path d="M1488 762 1509 773 1510 800 1489 790z" fill="#dcdcdc" />
      <path d="M1509 773 1540 776 1539 804 1510 800z" fill="#dadada" />
      <path d="M1509 773 1540 776 1524 790z" fill="#fafafa" />
      <path d="M1540 776 1572 773 1572 801 1539 804z" fill="#bdbdbd" />
      <path d="M1572 773 1597 762 1598 789 1572 801z" fill="#949494" />
      <path d="M1597 762 1607 749 1608 776 1598 789z" fill="#7a7a7a" />
      <path
        d="M1488 762 1506 785 1510 800M1509 773 1506 785 1489 790M1509 773 1524 790 1510 800M1506 785 1524 790 1539 804M1540 776 1524 790 1548 790M1540 776 1548 790 1572 773M1539 804 1548 790 1572 801M1572 773 1594 779 1572 801M1597 762 1594 779 1598 789M1594 779 1601 772 1607 749M1597 762 1601 772 1608 776M1601 772 1598 789M1485 754V778"
        stroke="#000"
        fill="none"
      />
      <path d="M1483 746 1493 733 1519 723 1549 719 1578 723 1600 734 1607 749 1597 762 1572 773 1540 776 1509 773 1488 762z" fill="#fcfcfc" />
      <path d={discMesh} stroke="#000" fill="none" />
      <path
        d="M1483 746 1493 733 1519 723 1549 719 1578 723 1600 734 1607 749 1597 762 1572 773 1540 776 1509 773 1488 762zM1483 746V774L1489 790 1510 800 1539 804 1572 801 1598 789 1608 776 1607 749M1488 762 1489 790M1572 773V801"
        stroke="#000"
        strokeWidth="1.600"
        fill="none"
      />

      <g className="text-lg" fill="#111">
        <text x="1825" y="496">80</text>
        <text x="1879" y="536">60</text>
        <text x="1959" y="548">mm</text>
        <text x="1937" y="579">40</text>
        <text x="1995" y="623">20</text>
        <text x="2026" y="866">100</text>
        <text x="1767" y="937">50</text>
        <text x="1782" y="982">mm</text>
        <text x="1492" y="1015">0</text>
        <text x="1303" y="1060">z</text>
        <text x="1278" y="1086">y</text>
        <text x="1354" y="1097">x</text>
      </g>

      <path d="M1308 1106 1291 1091" stroke="#55a845" strokeWidth="3" />
      <path d="m1287 1087 11 3-7 8z" fill="#55a845" />
      <path d="M1308 1106 1338 1097" stroke="#dc1f61" strokeWidth="3" />
      <path d="m1349 1095-10 8-5-8z" fill="#dc1f61" />
      <path d="M1308 1106V1075" stroke="#4a86be" strokeWidth="2" />
      <path d="m1308 1065 4 14h-8z" fill="#4a86be" />
    </svg>
  )
}

const blue = '#368ccf'

const lens = (sign) => (
  <Svg>
    <circle cx="10" cy="9" r="6.500" stroke={blue} strokeWidth="1.300" />
    <path d={sign} stroke={blue} />
    <path d="m14.500 14 5.500 6.500" stroke={blue} strokeWidth="2.500" />
  </Svg>
)

const axisPair = (a, b, label) => (
  <Svg>
    <path d="M3 22V3M1 6l2-4 2 4" stroke={a} strokeWidth="1.200" />
    <path d="M3 21.500h18M18 19l4 2.500-4 2.500" stroke={b} strokeWidth="1.200" />
    <text x="7" y="13" fontSize="11" fill="#777">
      {label}
    </text>
  </Svg>
)

const toolRows = [
  [
    { icon: lens('M7 9h6M10 6v6'), label: '放大' },
    { icon: lens('M7 9h6'), label: '缩小' },
    {
      icon: (
        <Svg>
          <path d="M9 8H2v14h14v-4" stroke={blue} strokeDasharray="3 2" />
          <circle cx="14" cy="9" r="6" stroke={blue} strokeWidth="1.300" />
          <path d="M11 9h6M14 6v6" stroke={blue} />
          <path d="m18 13 5 7" stroke={blue} strokeWidth="2.500" />
        </Svg>
      ),
      label: '缩放框',
      caret: true,
    },
    {
      icon: (
        <Svg>
          <path d="M6 6h12v12H6zM9 12h6M12 9v6" stroke="#777" strokeWidth="1.200" />
          <path d="m9 4 3-4 3 4zM9 20l3 4 3-4zM4 9l-4 3 4 3zM20 9l4 3-4 3z" fill={blue} />
        </Svg>
      ),
      label: '缩放到窗口大小',
      gap: 'ml-1',
    },
    {
      icon: (
        <Svg>
          <path d="M1 1h22v22H1z" stroke="#777" />
          <path d="M12 4v16M4 12h16" stroke="#777" />
          <path d="m9 5 3-4 3 4zM9 19l3 4 3-4zM5 9l-4 3 4 3zM19 9l4 3-4 3z" fill={blue} />
        </Svg>
      ),
      label: '缩放到选定',
    },
    {
      icon: (
        <Svg>
          <path d="M10 19V3m-2 3 2-4 2 4" stroke={blue} strokeWidth="1.200" />
          <path d="m10 19 12-8m-4 0 4-.500-2 4" stroke="#d4145a" strokeWidth="1.200" />
          <path d="M10 19 1 9m0 4V9h4" stroke="#55a845" strokeWidth="1.200" />
        </Svg>
      ),
      label: '默认视图',
      gap: 'ml-3',
      caret: true,
    },
    { icon: axisPair('#55a845', '#d4145a', 'xy'), label: 'xy 视图', gap: 'ml-1' },
    { icon: axisPair(blue, '#55a845', 'yz'), label: 'yz 视图' },
    { icon: axisPair(blue, '#d4145a', 'xz'), label: 'xz 视图' },
    {
      icon: (
        <Svg>
          <path d="M2 3h5v18H2z" fill={blue} />
          <path d="M7 9h5l6-5v16l-6-5H7z" fill="#5ba3da" />
          <path d="M12 9v6M7 9v6" stroke="#fff" />
          <path d="M19 4h3v16h-3z" fill={blue} />
        </Svg>
      ),
      label: '正交投影',
    },
    {
      icon: (
        <Svg>
          <path d="M14 4a8.500 8.500 0 1 0 6 8" stroke={blue} strokeWidth="1.500" />
          <path d="m12 0 6 4-6 4z" fill={blue} />
        </Svg>
      ),
      label: '旋转',
      gap: 'ml-3',
      caret: true,
    },
    { icon: icon.cylHalf, label: '选择域', gap: 'ml-3.5', caret: true },
    {
      icon: (
        <Svg>
          <path d="M2 11c0-4 5-6 10-6s10 2 10 6v7c0 3-2 5-6 5H8c-4 0-6-2-6-5z" fill="#d5d5d5" stroke="#999" />
          <path d="M2 14h20" stroke="#999" />
          <path d="M11 2h10v8H11z" fill="#fff" stroke={blue} />
          <path d="M14 4h5v4h-5z" fill={blue} />
        </Svg>
      ),
      label: '选择边界',
      gap: 'ml-4',
      caret: true,
    },
    {
      icon: (
        <Svg>
          <path d="M1 11c0-4 5-6 11-6s11 2 11 6v6c0 3-2 5-6 5H7c-4 0-6-2-6-5z" fill={blue} />
          <path d="M10 2h9v7h-9z" fill={blue} stroke="#fff" />
        </Svg>
      ),
      label: '选择对象',
      caret: true,
    },
    {
      icon: (
        <Svg>
          <path d="M2 2h20v20H2z" stroke={blue} strokeDasharray="3 2" />
          <path d="M6 6h11v11H6z" fill="#7fb4df" />
          <path d="m12 10 10 9-4 .5 3 4-2 .500-3-4-3 3z" fill="#2276bb" />
        </Svg>
      ),
      label: '框选',
      gap: 'ml-1',
    },
    {
      icon: (
        <Svg>
          <path d="M2 2h20v20H2z" stroke={blue} strokeDasharray="3 2" />
          <path d="M8 5h10v12H8z" fill="#9fc6e6" />
          <path d="m3 1 6 11" stroke="#8a7a66" strokeWidth="1.600" />
          <path d="m6 13 5-3 8 11-8 3z" fill="#f8c777" stroke="#e0a145" />
        </Svg>
      ),
      label: '清除选择',
    },
    {
      icon: (
        <Svg className="size-5">
          <path d="M3 12q9-9 18 0-9 9-18 0zM4 4l16 16" stroke="#9aa8b5" strokeWidth="1.500" />
          <circle cx="12" cy="12" r="3" fill="#9aa8b5" />
        </Svg>
      ),
      label: '隐藏',
      gap: 'ml-4',
    },
  ],
  [
    {
      icon: (
        <Svg>
          <path d="M2 4h20v16H2zM2 7h20" stroke={blue} strokeWidth="1.300" />
          <path d="M6 13.500q6-6 12 0-6 5-12 0z" fill={blue} />
          <circle cx="12" cy="13.500" r="1.500" fill="#fff" />
        </Svg>
      ),
      label: '视图',
      caret: true,
    },
    {
      icon: (
        <Svg>
          <path d="M2 3h14l5 4v14H7l-5-4z" fill="#dcdcdc" stroke="#999" />
          <path d="m2 3 5 4h14M7 7v14M10 1v17l5 5V6z" stroke="#888" />
        </Svg>
      ),
      label: '裁剪平面',
      gap: 'ml-3.5',
      caret: true,
    },
    {
      icon: (
        <Svg>
          <path d="M1 9h6l8-7v20l-8-7H1z" fill="#2276bb" />
          <path d="M17 5q5 7 0 14z" fill="#5ba3da" />
        </Svg>
      ),
      label: '场景光',
      wide: true,
    },
    {
      icon: (
        <Svg>
          <path d="M2 3h14l6 4v14H8l-6-4z" fill="#e4ebf2" stroke="#8fa9c0" />
          <path d="m2 3 6 4h14M8 7v14" stroke="#8fa9c0" />
        </Svg>
      ),
      label: '透明',
    },
    {
      icon: (
        <Svg>
          <path d="M2 3h15l5 4v14H7l-5-4zM2 3l5 4h15M7 7v14M2 17h15l5 4M17 3v14" stroke="#3c8dd0" />
        </Svg>
      ),
      label: '线框',
      on: true,
    },
    {
      icon: (
        <Svg>
          <path d="M2 2h20v20H2z" fill="#d3e6f7" stroke="#777" />
          <path d="M12 17V6M9 9l3-4 3 4" stroke={blue} strokeWidth="1.300" />
          <path d="m12 17-6-5v4" stroke="#55a845" strokeWidth="1.300" />
          <path d="m12 17 6-5v4" stroke="#d4145a" strokeWidth="1.300" />
        </Svg>
      ),
      label: '坐标轴',
      on: true,
    },
    {
      icon: (
        <Svg>
          <path d="M2 2h20v20H2z" fill="#d3e6f7" stroke="#777" />
          <path d="M5 5h14v14H5zM8.500 5v14M12 5v14M15.500 5v14M5 8.500h14M5 12h14M5 15.500h14" stroke="#2276bb" />
        </Svg>
      ),
      label: '栅格',
      on: true,
    },
    { icon: <MeshTriangle color="#6f8ca8" fill="#b7cde2" />, label: '网格渲染', on: true },
    {
      icon: (
        <Svg>
          <path d="m1 1 14-1 6 4v9H7L1 9z" fill="#d9d9d9" stroke="#aaa" />
          <path d="M7 5h14v8H7z" fill="#7fbdea" />
          <circle cx="15" cy="19" r="4" fill="#fff" stroke="#d4145a" strokeWidth="1.400" />
          <path d="m12 22 6-6" stroke="#d4145a" strokeWidth="1.400" />
        </Svg>
      ),
      label: '禁用',
      gap: 'ml-3',
    },
    {
      icon: (
        <Svg>
          <path d="M15 1c8 2 8 12 3 17-4 5-13 6-14 2-1-3 4-4 2-8S7-1 15 1z" fill="#dedede" stroke="#999" />
          <circle cx="11" cy="6" r="2.500" fill="#fff" stroke="#888" />
          <circle cx="17" cy="8" r="2" fill="#f2a53f" />
          <circle cx="15" cy="14" r="2.500" fill={blue} />
          <circle cx="9" cy="17" r="2.800" fill="#dc1f3f" />
        </Svg>
      ),
      label: '颜色',
      caret: true,
    },
    {
      icon: (
        <Svg>
          <circle cx="12" cy="12" r="7.500" stroke={blue} strokeWidth="5.500" />
          <path d="m12 1 4 9M22 8l-8 6M20 20l-9-3M9 23l-1-10M1 14l8-6M4 4l9 3" stroke="#fff" strokeWidth="1.500" />
        </Svg>
      ),
      label: '图像快照',
      gap: 'ml-3.5',
      caret: true,
    },
    {
      icon: (
        <Svg className="size-5">
          <path d="M1 6h5l2-3h8l2 3h5v15H1z" fill={blue} />
          <circle cx="12" cy="13" r="5" fill={blue} stroke="#fff" strokeWidth="1.600" />
        </Svg>
      ),
      label: '快照',
      gap: 'ml-1',
    },
    {
      icon: (
        <Svg>
          <path d="M7 2h10v7H7z" fill="#fff" stroke={blue} />
          <path d="M2 9h20v10H2z" fill="#a7c4dc" stroke={blue} />
          <path d="M7 14h10v9H7z" fill="#fff" stroke={blue} />
        </Svg>
      ),
      label: '打印',
    },
  ],
]

function Tool({ tool }) {
  if (tool.wide) {
    return (
      <button
        type="button"
        aria-label={tool.label}
        className="ml-3.5 flex h-[27px] w-[55px] shrink-0 items-center justify-between rounded-[3px] border-2 border-[#2e5fa3] bg-linear-to-b from-[#7fb0e2] to-[#cfe6fb] pr-1.5 pl-1 text-[#444]"
      >
        <span className="flex">{tool.icon}</span>
        <Caret className="size-3" />
      </button>
    )
  }
  return (
    <>
      <button
        type="button"
        aria-label={tool.label}
        className={clsx(
          'flex h-[27px] shrink-0 items-center justify-center',
          tool.gap,
          tool.on
            ? '-mr-0.5 w-7 rounded-[3px] border-2 border-[#2e5fa3] bg-linear-to-b from-[#7fb0e2] to-[#cfe6fb]'
            : 'w-[26px]',
        )}
      >
        {tool.icon}
      </button>
      {tool.caret && (
        <span className="flex w-4 shrink-0 justify-center text-[#4a4a4a]">
          <Caret className="size-3" />
        </span>
      )}
    </>
  )
}

function Graphics() {
  return (
    <section className="ml-2 flex min-w-0 flex-1 flex-col overflow-hidden border-t-2 border-l-2 border-[#d2d3d6] bg-linear-to-b from-[#fbfcff] via-[#f2f7ff] to-[#e2f0ff]">
      <div className="flex h-[46px] items-end border-b-2 border-[#d8d8db] bg-[#fbfcff] pl-1.5 text-xl">
        <button type="button" className="-mb-0.5 h-[38px] w-[55px] border-2 border-b-0 border-[#d8d8db] bg-[#fbfcff] pt-0.5 text-[#2b579a]">
          图形
        </button>
        <button type="button" className="ml-3 flex h-9 w-[122px] items-center justify-between bg-[#ebebeb] pr-2.5 pl-1.5">
          收敛图 1
          <Svg className="size-3">
            <path d="m2 2 20 20M22 2 2 22" stroke="#c7ccd8" strokeWidth="3" />
          </Svg>
        </button>
      </div>
      <div className="flex h-[73px] flex-col gap-[3px] bg-[#fbfcff] pt-[10px] pl-2.5">
        {toolRows.map((row, i) => (
          <div key={i} className="flex items-center gap-2">
            {row.map((tool) => (
              <Tool key={tool.label} tool={tool} />
            ))}
          </div>
        ))}
      </div>
      <Plot />
    </section>
  )
}

/* ---------- context menu and notes ---------- */

function ContextMenu() {
  return (
    <ul
      role="menu"
      className="absolute -top-1.5 left-[198px] w-[439px] border border-[#9b9b9b] bg-[#fbfcff] pb-1.5 shadow-sm"
    >
      {menuItems.map((item, i) =>
        item ? (
          <li key={i}>
            <button type="button" role="menuitem" className="flex h-9 w-full items-center text-left text-lg">
              <span className="flex w-[52px] justify-center pr-2">{item.icon && icon[item.icon]}</span>
              <span className="flex-1">{item.label}</span>
              {item.key && <kbd className={clsx('w-36', FONT)}>{item.key}</kbd>}
              {item.sub && (
                <Svg className="mr-[18px] h-3 w-1.5" box="0 0 6 12">
                  <path d="m0 0 6 6-6 6z" fill="#000" />
                </Svg>
              )}
            </button>
          </li>
        ) : (
          <li key={i} role="separator" className="my-px mr-1 ml-[52px] h-0.5 bg-[#969896]" />
        ),
      )}
    </ul>
  )
}

function Notes() {
  return (
    <>
      <div className="absolute top-[468px] left-[200px] h-[52px] w-[126px] border-2 border-[#ee1c24]" />
      <Svg className="absolute top-[480px] left-[350px] h-7 w-[164px]" box="0 0 164 28">
        <path d="m3 17 140-3" stroke="#ee1c24" strokeWidth="5" strokeLinecap="round" />
        <path d="m141 4 23 10-23 10 3-10z" fill="#ee1c24" />
      </Svg>
      <p className="absolute top-[455px] left-[561px] text-[42px] leading-[50px] font-bold whitespace-nowrap text-[#ee1c24]">
        先构建网格，才会出现绘制这个选项
      </p>
      <p className="absolute right-4 bottom-1.5 text-[19px] text-[#8b9097] [text-shadow:-1px_-1px_0_#fff]">CSDN @九亿fupo的梦</p>
    </>
  )
}

export default function App() {
  return (
    <div lang="zh-CN" className={clsx('relative flex h-screen flex-col overflow-hidden bg-[#f8faff] text-black', FONT)}>
      <TitleBar />
      <div className="h-1 shrink-0" />
      <RibbonTabs />
      <Ribbon />
      <div className="mt-1.5 flex min-h-0 flex-1">
        <ModelBuilder />
        <Settings />
        <Graphics />
      </div>
      <ContextMenu />
      <Notes />
    </div>
  )
}
